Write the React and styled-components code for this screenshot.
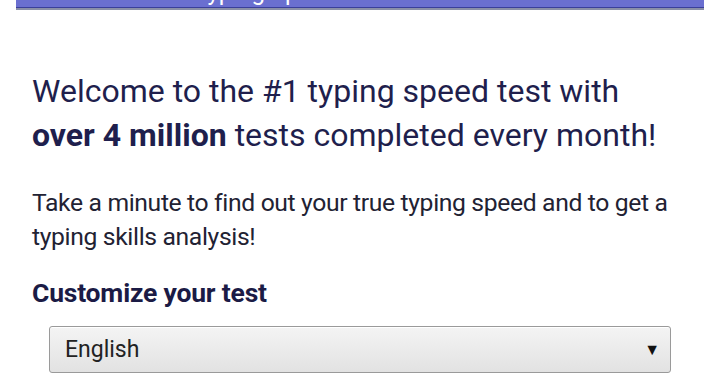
import React from "react";
import styled, { createGlobalStyle } from "styled-components";

const Global = createGlobalStyle`
  html, body { margin: 0; padding: 0; background: #ffffff; }
  body { font-family: Roboto, "Liberation Sans", Arial, sans-serif; overflow: hidden; }
`;

const Page = styled.div`
  width: 712px;
  height: 374px;
  overflow: hidden;
  background: #fff;
`;

const TopBar = styled.div`
  margin: 0 8px 0 16px;
  height: 7px;
  background: #6a6fd0;
  border-bottom: 1px solid #3a3f9a;
  box-shadow: 0 2px 0 #8a8fa8;
  overflow: hidden;
`;

const BarTitle = styled.div`
  color: #fff;
  font-size: 24px;
  line-height: 24px;
  margin-top: -20px;
  padding-left: 178px;
  white-space: nowrap;
`;

const Content = styled.main`
  padding: 61px 32px 0 32px;
  display: flex;
  flex-direction: column;
`;

const Heading = styled.h1`
  margin: 0;
  font-size: 32px;
  line-height: 44px;
  font-weight: 400;
  color: #1f1f4d;
  white-space: nowrap;
  b { font-weight: 700; }
`;

const Lead = styled.p`
  margin: 29px 0 0 0;
  font-size: 24.7px;
  line-height: 34px;
  color: #222233;
  letter-spacing: -0.35px;
`;

const SubHeading = styled.h2`
  margin: 24px 0 0 0;
  font-size: 26.5px;
  line-height: 30px;
  font-weight: 700;
  color: #1b1b45;
  letter-spacing: -0.2px;
`;

const SelectBox = styled.div`
  margin: 18px 0 0 17px;
  width: 622px;
  height: 47px;
  box-sizing: border-box;
  border: 1px solid #9a9a9a;
  border-radius: 3px;
  background: linear-gradient(#f4f4f4, #e2e2e2);
  box-shadow: inset 0 1px 0 #ffffff;
  display: flex;
  align-items: center;
  justify-content: space-between;
  padding: 0 10px 0 15px;
  font-size: 23px;
  color: #222;
`;

const Arrow = styled.span`
  font-size: 16px;
  color: #111;
`;

export default function App() {
  return (
    <Page>
      <Global />
      <TopBar>
        <BarTitle>Typing Speed Test</BarTitle>
      </TopBar>
      <Content>
        <Heading>
          Welcome to the #1 typing speed test with
          <br />
          <b>over 4 million</b> tests completed every month!
        </Heading>
        <Lead>
          Take a minute to find out your true typing speed and to get a typing skills analysis!
        </Lead>
        <SubHeading>Customize your test</SubHeading>
        <SelectBox>
          <span>English</span>
          <Arrow>▼</Arrow>
        </SelectBox>
      </Content>
    </Page>
  );
}
